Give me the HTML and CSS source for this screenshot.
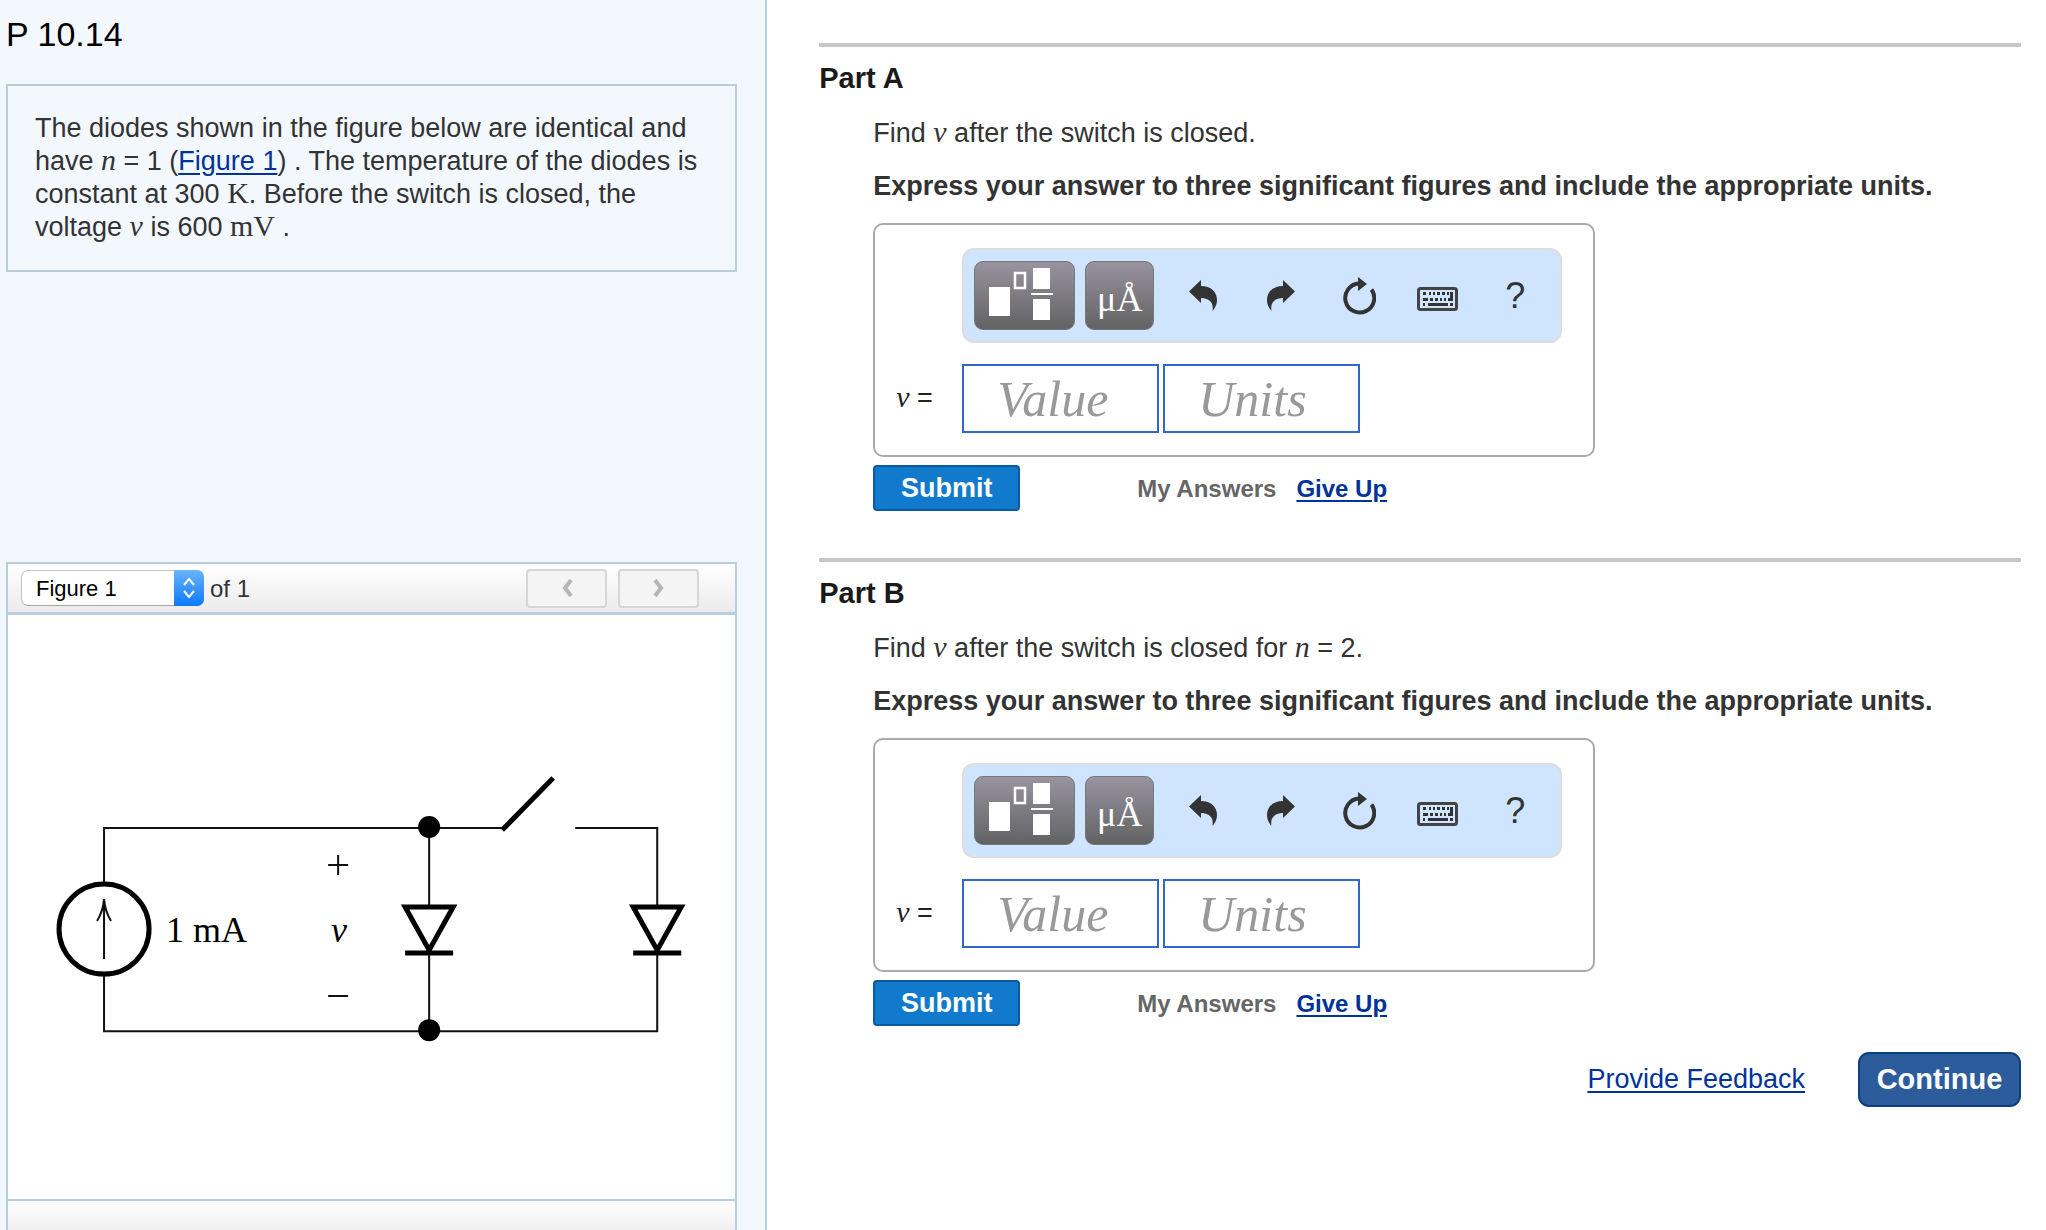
FILE: index.html
```html
<!DOCTYPE html>
<html lang="en">
<head>
    <meta charset="utf-8">
    <title>P 10.14</title>
    <link rel="stylesheet" href="styles.css">
</head>
<body>
    <!-- icons shared by both answer toolbars -->
    <svg class="icon-defs" width="0" height="0" aria-hidden="true">
        <symbol id="icon-template" viewBox="0 0 64 54">
            <path fill="#fff" d="M0 20h21v29H0zM44 1h17v21H44zM42 26h22v2H42zM44 32h17v21H44z"/>
            <path fill="none" stroke="#fff" stroke-width="2.500" d="M26 6h10v15H26z"/>
        </symbol>
        <symbol id="icon-undo" viewBox="0 0 28 31">
            <path d="M0 11.500 12 0v6c10 0 16 6 16 14 0 5-2.500 8.500-4.500 11 1.500-8-3-13-11.500-13v5z"/>
        </symbol>
        <symbol id="icon-redo" viewBox="0 0 28 31">
            <path d="M28 11.500 16 0v6C6 6 0 12 0 20c0 5 2.500 8.500 4.500 11C3 23 7.500 18 16 18v5z"/>
        </symbol>
        <symbol id="icon-reset" viewBox="0 0 34 38">
            <path fill="none" stroke="#333" stroke-width="4" d="M29.500 12.500A14.500 14.500 0 1 1 17 6.500"/>
            <path d="M16 0l9 7-9 7z"/>
        </symbol>
        <symbol id="icon-keyboard" viewBox="0 -6 41 30">
            <rect x="1.500" y="1.500" width="38" height="21" rx="2" fill="none" stroke="#444" stroke-width="3"/>
            <path d="M6 5h3v3H6zM12 5h2v3h-2zM16 5h2v3h-2zM20 5h3v3h-3zM25 5h3v3h-3zM30 5h2v3h-2zM33 5h3v9h-5v-3h2zM6 11h5v3H6zM13 11h3v3h-3zM18 11h3v3h-3zM23 11h2v3h-2zM27 11h2v3h-2zM6 16h2v3H6zM11 16h20v3H11zM33 16h3v3h-3z"/>
        </symbol>
    </svg>

    <div class="page">
        <div class="left-panel">
            <h1>P 10.14</h1>
            <div class="problem">
                The diodes shown in the figure below are identical and have <i class="math">n</i> = 1 (<a href="#figure">Figure 1</a>) . The temperature of the diodes is constant at 300 <span class="math">K</span>. Before the switch is closed, the voltage <i class="math">v</i> is 600 <span class="math">mV</span> .
            </div>

            <div class="figure-box" id="figure">
                <div class="figure-bar">
                    <div class="select-wrap">
                        <select id="figureSelect" aria-label="Figure">
                            <option>Figure 1</option>
                        </select>
                        <svg class="select-arrows" viewBox="0 0 30 36" aria-hidden="true">
                            <path d="M10 15l5-6 5 6M10 21l5 6 5-6"/>
                        </svg>
                    </div>
                    <label for="figureSelect">of 1</label>
                    <div class="figure-nav">
                        <button type="button" aria-label="Previous figure" disabled>
                            <svg width="12" height="18" viewBox="0 0 12 18"><path d="M10 1L4 9l6 8"/></svg>
                        </button>
                        <button type="button" aria-label="Next figure" disabled>
                            <svg width="12" height="18" viewBox="0 0 12 18"><path d="M2 1l6 8-6 8"/></svg>
                        </button>
                    </div>
                </div>

                <svg class="circuit" viewBox="0 0 727 584" role="img" aria-label="Current source, switch and two diodes">
                    <!-- wires -->
                    <path class="wire" d="M96 269V213H495M96 359V416H649V340M567 213H649V292M421 213V292M421 340V416"/>
                    <path class="heavy" d="M494 215L545 163"/>
                    <circle cx="421" cy="212" r="11"/>
                    <circle cx="421" cy="415" r="11"/>
                    <!-- current source -->
                    <circle class="heavy" cx="96" cy="314" r="45"/>
                    <path class="wire" d="M96 344V284M89 306Q95 296 96 284Q97 296 103 306"/>
                    <!-- diodes -->
                    <path class="heavy" d="M397 292H445L421 335ZM397 338H445"/>
                    <path class="heavy" d="M625 292H673L649 335ZM625 338H673"/>
                    <!-- labels -->
                    <path class="wire" d="M320 250H340M330 240V260M320 381H340"/>
                    <text x="158" y="327">1 mA</text>
                    <text x="323" y="327" class="var">v</text>
                </svg>
                <div class="figure-foot"></div>
            </div>
        </div>

        <div class="right-panel">
            <form class="part">
                <h2>Part A</h2>
                <div class="part-body">
                    <p>Find <i class="math">v</i> after the switch is closed.</p>
                    <p><b>Express your answer to three significant figures and include the appropriate units.</b></p>
                    <div class="answer-box">
                        <div class="toolbar">
                            <button type="button" class="key key-wide" aria-label="Templates"><svg width="64" height="54"><use href="#icon-template"/></svg></button>
                            <button type="button" class="key key-units">μÅ</button>
                            <button type="button" class="tool" aria-label="Undo"><svg width="28" height="31"><use href="#icon-undo"/></svg></button>
                            <button type="button" class="tool" aria-label="Redo"><svg width="28" height="31"><use href="#icon-redo"/></svg></button>
                            <button type="button" class="tool" aria-label="Reset"><svg width="34" height="38"><use href="#icon-reset"/></svg></button>
                            <button type="button" class="tool" aria-label="Keyboard"><svg width="41" height="30"><use href="#icon-keyboard"/></svg></button>
                            <button type="button" class="tool">?</button>
                        </div>
                        <label for="valueA"><i class="math">v</i> =</label>
                        <div class="fields">
                            <input type="text" id="valueA" placeholder="Value">
                            <input type="text" aria-label="Units" placeholder="Units">
                        </div>
                    </div>
                    <div class="actions">
                        <button type="button" class="submit">Submit</button>
                        <span class="my-answers">My Answers</span>
                        <a href="#">Give Up</a>
                    </div>
                </div>
            </form>

            <form class="part">
                <h2>Part B</h2>
                <div class="part-body">
                    <p>Find <i class="math">v</i> after the switch is closed for <i class="math">n</i> = 2.</p>
                    <p><b>Express your answer to three significant figures and include the appropriate units.</b></p>
                    <div class="answer-box">
                        <div class="toolbar">
                            <button type="button" class="key key-wide" aria-label="Templates"><svg width="64" height="54"><use href="#icon-template"/></svg></button>
                            <button type="button" class="key key-units">μÅ</button>
                            <button type="button" class="tool" aria-label="Undo"><svg width="28" height="31"><use href="#icon-undo"/></svg></button>
                            <button type="button" class="tool" aria-label="Redo"><svg width="28" height="31"><use href="#icon-redo"/></svg></button>
                            <button type="button" class="tool" aria-label="Reset"><svg width="34" height="38"><use href="#icon-reset"/></svg></button>
                            <button type="button" class="tool" aria-label="Keyboard"><svg width="41" height="30"><use href="#icon-keyboard"/></svg></button>
                            <button type="button" class="tool">?</button>
                        </div>
                        <label for="valueB"><i class="math">v</i> =</label>
                        <div class="fields">
                            <input type="text" id="valueB" placeholder="Value">
                            <input type="text" aria-label="Units" placeholder="Units">
                        </div>
                    </div>
                    <div class="actions">
                        <button type="button" class="submit">Submit</button>
                        <span class="my-answers">My Answers</span>
                        <a href="#">Give Up</a>
                    </div>
                </div>
            </form>

            <div class="page-footer">
                <a href="#">Provide Feedback</a>
                <button type="button" class="continue">Continue</button>
            </div>
        </div>
    </div>
</body>
</html>
```
FILE: styles.css
```css
* {
    box-sizing: border-box;
}

body {
    margin: 0;
    font-family: "Liberation Sans", Arial, sans-serif;
    font-size: 27px;
    line-height: 33px;
    color: #333;
    background: #fff;
}

a {
    color: #003399;
    text-underline-offset: 3px;
}

button {
    font-family: inherit;
    padding: 0;
    cursor: pointer;
}

.icon-defs {
    position: absolute;
}

.math {
    font-family: "Liberation Serif", "Times New Roman", serif;
    font-size: 30px;
    line-height: 24px;
}

.page {
    display: grid;
    grid-template-columns: 37.5% 1fr;
    min-height: 100vh;
}

/* left side: problem text and figure */
.left-panel {
    display: flex;
    flex-direction: column;
    padding: 14px 28px 0 6px;
    background: #f3f8ff;
    border-right: 2px solid #b9cde0;
}

h1 {
    margin: 0 0 30px;
    font-size: 34px;
    font-weight: normal;
    line-height: 40px;
    color: #000;
}

.problem {
    padding: 26px 27px;
    border: 2px solid #b9cde0;
    margin-bottom: 290px;
}

.figure-box {
    display: flex;
    flex-direction: column;
    flex: 1;
    border: 2px solid #b9cde0;
    border-bottom: none;
    background: #fff;
}

.figure-bar {
    display: flex;
    align-items: center;
    height: 51px;
    padding: 0 36px 0 13px;
    background: linear-gradient(#fff, #ebebeb);
    border-bottom: 3px solid #b9cde0;
    font-size: 24px;
}

.select-wrap {
    position: relative;
    margin-right: 6px;
}

.select-wrap select {
    display: block;
    appearance: none;
    width: 183px;
    height: 36px;
    padding: 0 36px 0 14px;
    border: 1px solid #c4c4c4;
    border-bottom-color: #a4a4a4;
    border-radius: 7px;
    background: #fff;
    font-family: inherit;
    font-size: 22px;
    color: #000;
}

.select-arrows {
    position: absolute;
    top: 0;
    right: 0;
    width: 30px;
    height: 36px;
    border-radius: 0 7px 7px 0;
    background: linear-gradient(#6cb3fa, #0a7aff);
    fill: none;
    stroke: #fff;
    stroke-width: 2;
    pointer-events: none;
}

.figure-nav {
    display: flex;
    gap: 11px;
    margin-left: auto;
}

.figure-nav button {
    display: flex;
    align-items: center;
    justify-content: center;
    width: 81px;
    height: 39px;
    border: 2px solid #d6d6d6;
    border-radius: 4px;
    background: #f4f4f4;
}

.figure-nav svg {
    fill: none;
    stroke: #b5b5b5;
    stroke-width: 4;
}

.circuit {
    display: block;
    width: 100%;
}

.circuit .wire {
    fill: none;
    stroke: #111;
    stroke-width: 2;
}

.circuit .heavy {
    fill: none;
    stroke: #000;
    stroke-width: 5;
}

.circuit text {
    font-family: "Liberation Serif", "Times New Roman", serif;
    font-size: 36px;
}

.circuit .var {
    font-style: italic;
}

.figure-foot {
    flex: 1;
    border-top: 2px solid #b9cde0;
    background: linear-gradient(#fff, #f0f0f0);
}

/* right side: answer parts */
.right-panel {
    padding: 43px 25px 0 52px;
}

.part {
    margin-bottom: 47px;
    padding-top: 15px;
    border-top: 4px solid #c8c8c8;
}

.part:last-of-type {
    margin-bottom: 26px;
}

h2 {
    margin: 0 0 23px;
    font-size: 29px;
    line-height: 32px;
    color: #1a1a1a;
}

.part-body {
    padding-left: 54px;
}

.part-body p {
    margin: 0 0 20px;
}

.answer-box {
    display: grid;
    grid-template-columns: 66px auto;
    row-gap: 21px;
    align-items: center;
    width: fit-content;
    padding: 23px 31px 22px 21px;
    border: 2px solid #aaa;
    border-radius: 10px;
    color: #222;
}

.toolbar {
    grid-column: 2;
    display: flex;
    align-items: center;
    height: 95px;
    padding: 0 6px 0 10px;
    border: 2px solid #ddd;
    border-radius: 12px;
    background: #cfe5ff;
}

.key {
    display: flex;
    align-items: center;
    justify-content: center;
    width: 69px;
    height: 69px;
    margin-right: 10px;
    border: 1px solid #777;
    border-radius: 9px;
    background: linear-gradient(#9894a0, #626262);
    font-family: "Liberation Serif", "Times New Roman", serif;
    font-size: 36px;
    color: #fff;
}

.key-wide {
    width: 101px;
    padding: 0 8px 4px 0;
}

.key-units {
    padding-top: 6px;
}

.tool {
    display: flex;
    align-items: center;
    justify-content: center;
    width: 78px;
    height: 69px;
    border: none;
    background: none;
    font-size: 36px;
    color: #333;
    fill: #333;
}

.fields {
    display: flex;
    gap: 4px;
}

.fields input {
    width: 197px;
    height: 69px;
    padding: 0 33px;
    border: 2px solid #3366cc;
    font-family: "Liberation Serif", "Times New Roman", serif;
    font-size: 50px;
    font-style: italic;
}

.fields input::placeholder {
    color: #999;
}

.actions {
    display: flex;
    align-items: center;
    margin-top: 8px;
    font-size: 24px;
    font-weight: bold;
}

.submit {
    width: 147px;
    height: 46px;
    margin-right: 117px;
    border: 2px solid #0a5a9c;
    border-radius: 4px;
    background: #117acc;
    font-size: 27px;
    font-weight: bold;
    color: #fff;
}

.my-answers {
    margin-right: 20px;
    color: #666;
}

.page-footer {
    display: flex;
    align-items: center;
    justify-content: flex-end;
    gap: 53px;
}

.continue {
    width: 163px;
    height: 55px;
    border: 2px solid #0f3f7a;
    border-radius: 11px;
    background: #2c5c9c;
    font-size: 29px;
    font-weight: bold;
    color: #fff;
}
```
